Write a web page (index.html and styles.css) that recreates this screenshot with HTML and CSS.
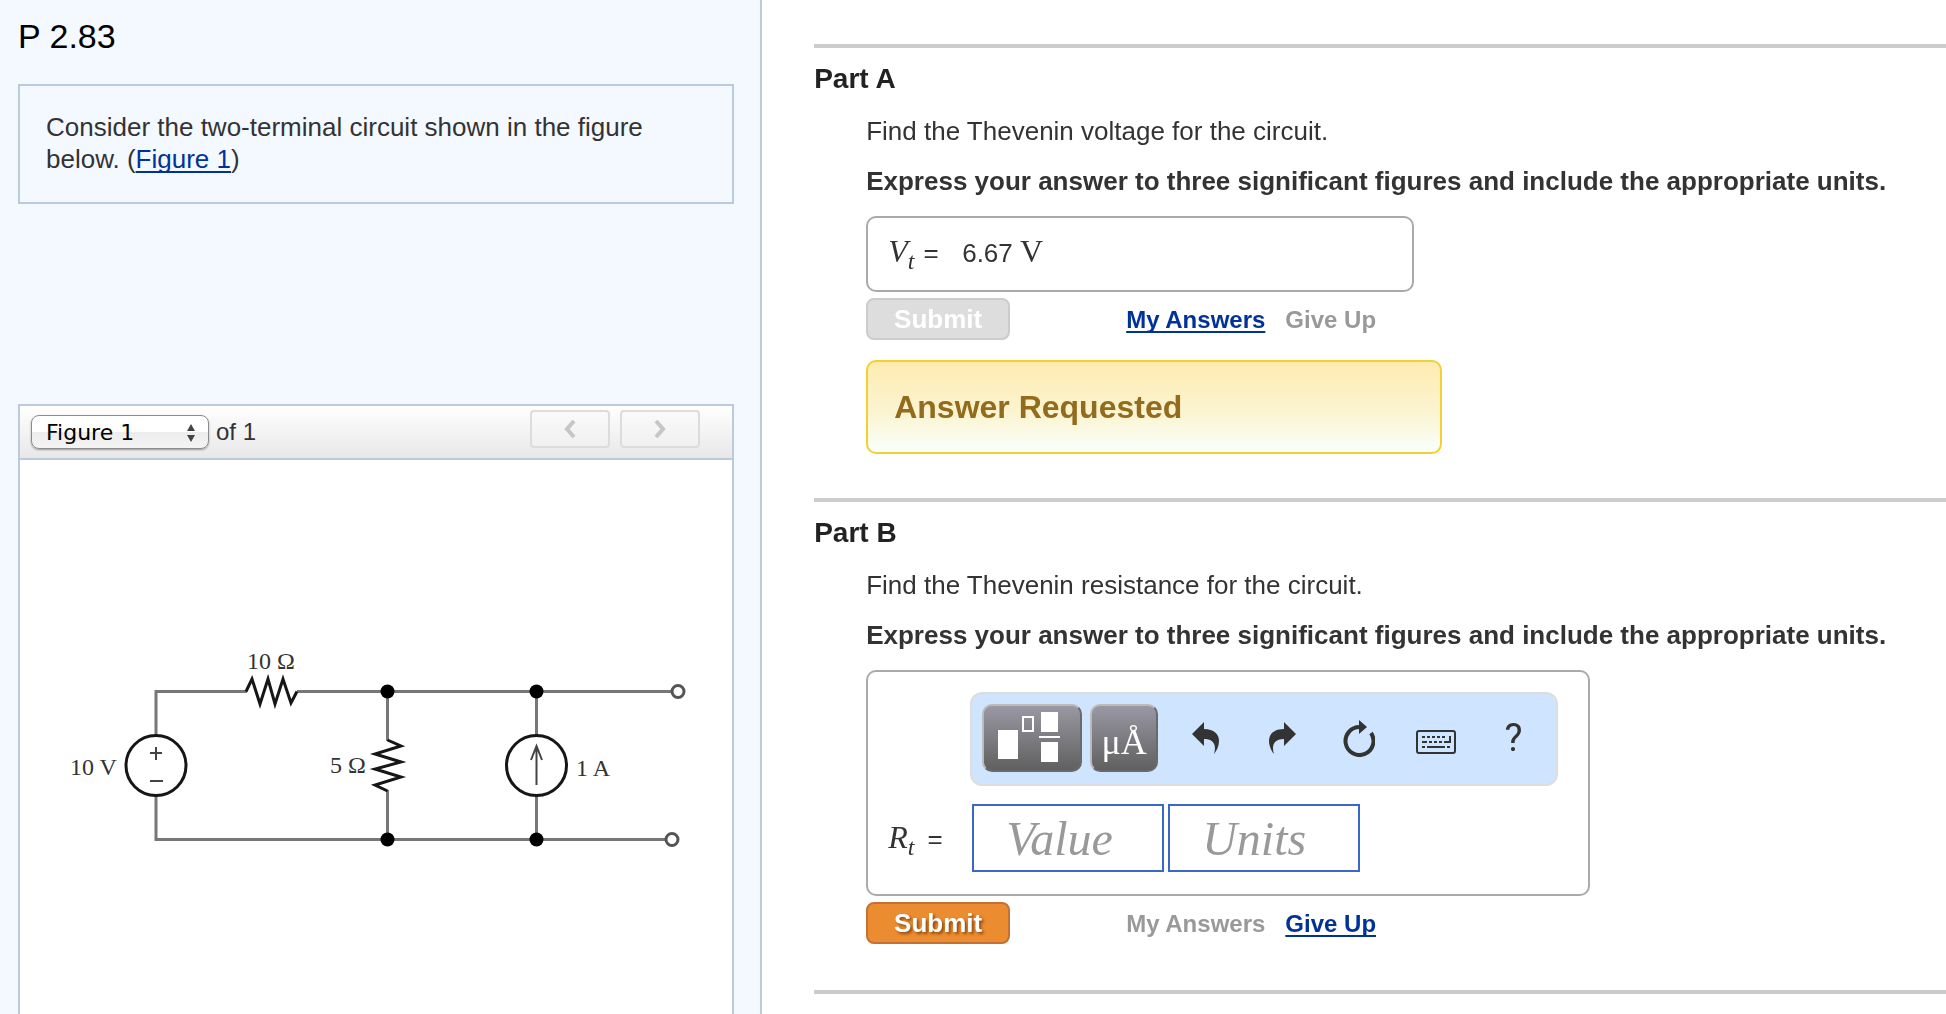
FILE: index.html
```
<!DOCTYPE html>
<html lang="en">
<head>
    <meta charset="UTF-8">
    <meta name="viewport" content="width=device-width, initial-scale=1.0">
    <title>P 2.83</title>
    <link rel="stylesheet" href="styles.css">
</head>
<body>

<div class="page">

    <div class="leftPane">
        <h1>P 2.83</h1>

        <div class="statement">
            Consider the two-terminal circuit shown in the figure below. (<a href="#figure">Figure 1</a>)
        </div>

        <div class="figure" id="figure">
            <div class="figureBar">
                <div class="selectWrap">
                    <select id="figureSelect" aria-label="Figure">
                        <option>Figure 1</option>
                    </select>
                    <svg class="selectArrows" width="10" height="18" viewBox="0 0 10 18" aria-hidden="true">
                        <path d="M5 0L9 7H1zM5 18L9 11H1z" fill="#444"/>
                    </svg>
                </div>
                <label for="figureSelect">of 1</label>
                <div class="figureNav">
                    <button type="button" aria-label="Previous figure" disabled>
                        <svg width="14" height="18" viewBox="0 0 14 18"><path d="M11 1L4 9L11 17" fill="none" stroke="#c6c6c6" stroke-width="4"/></svg>
                    </button>
                    <button type="button" aria-label="Next figure" disabled>
                        <svg width="14" height="18" viewBox="0 0 14 18"><path d="M3 1L10 9L3 17" fill="none" stroke="#c6c6c6" stroke-width="4"/></svg>
                    </button>
                </div>
            </div>

            <div class="figureBody">
                <svg class="circuit" width="640" height="210" viewBox="60 640 640 210" role="img" aria-label="Two-terminal circuit">
                    <!-- wires -->
                    <g fill="none" stroke="#777" stroke-width="3">
                        <path d="M247 691.5H156V736M156 796V839.5H666"/>
                        <path d="M297 691.5H672"/>
                        <path d="M387.5 691.5V741M387.5 790V839.5"/>
                        <path d="M536.5 691.5V736M536.5 796V839.5"/>
                    </g>
                    <!-- open terminals -->
                    <g fill="none" stroke="#555" stroke-width="3">
                        <circle cx="678" cy="691.5" r="6"/>
                        <circle cx="672" cy="839.5" r="6"/>
                    </g>
                    <!-- resistors -->
                    <g fill="none" stroke="#161616" stroke-width="3">
                        <path d="M246 691.5L252 679L260 704L268 679L275 704L283 679L291 703L297 691.5"/>
                        <path d="M387.5 740L401 746L375 754L401 762L375 769L401 777L375 785L387.5 791"/>
                    </g>
                    <!-- sources -->
                    <g fill="none" stroke="#161616" stroke-width="3">
                        <circle cx="156" cy="765.5" r="30"/>
                        <circle cx="536.5" cy="765.5" r="30"/>
                    </g>
                    <g fill="none" stroke="#444" stroke-width="2">
                        <path d="M150 753H162M156 747V760M150 781H163"/>
                        <path d="M536.5 785V746M531 760L536.5 746L542 760"/>
                    </g>
                    <g fill="#000">
                        <circle cx="387.5" cy="691.5" r="7"/>
                        <circle cx="387.5" cy="839.5" r="7"/>
                        <circle cx="536.5" cy="691.5" r="7"/>
                        <circle cx="536.5" cy="839.5" r="7"/>
                    </g>
                    <g class="circuitText">
                        <text x="247" y="669">10 Ω</text>
                        <text x="70" y="775">10 V</text>
                        <text x="330" y="773">5 Ω</text>
                        <text x="576" y="776">1 A</text>
                    </g>
                </svg>
            </div>
        </div>
    </div>

    <div class="rightPane">

        <section class="part">
            <h2>Part A</h2>
            <div class="partContent">
                <p>Find the Thevenin voltage for the circuit.</p>
                <p class="instructions">Express your answer to three significant figures and include the appropriate units.</p>

                <div class="answerBox">
                    <span class="mathLabel"><i>V<sub>t</sub></i> =</span>
                    <span class="answerValue">6.67 <span class="unit">V</span></span>
                </div>

                <div class="actions">
                    <button type="button" class="submit" disabled>Submit</button>
                    <a href="#" class="link">My Answers</a>
                    <span class="link off">Give Up</span>
                </div>

                <div class="feedback">Answer Requested</div>
            </div>
        </section>

        <section class="part">
            <h2>Part B</h2>
            <div class="partContent">
                <p>Find the Thevenin resistance for the circuit.</p>
                <p class="instructions">Express your answer to three significant figures and include the appropriate units.</p>

                <div class="answerBox entry">
                    <div class="toolbar">
                        <button type="button" class="tool templates" aria-label="Templates">
                            <svg width="70" height="52" viewBox="0 0 70 52">
                                <path d="M1 18H21V47H1zM44 0H61V20H44zM44 30H61V50H44zM42 24H63V26H42z" fill="#fff"/>
                                <path d="M26 5H36V19H26z" fill="none" stroke="#fff" stroke-width="2"/>
                            </svg>
                        </button>
                        <button type="button" class="tool symbols">μÅ</button>
                        <button type="button" class="iconButton" aria-label="Undo">
                            <svg width="28" height="34" viewBox="0 0 28 34"><path d="M1 13L13 1V8C23 8 28 13 28 20C28 25 26 29 23 33C25 27 25 18 13 18V25z" fill="#333"/></svg>
                        </button>
                        <button type="button" class="iconButton" aria-label="Redo">
                            <svg width="28" height="34" viewBox="0 0 28 34"><path d="M28 13L16 1V8C6 8 1 13 1 20C1 25 3 29 6 33C4 27 4 18 16 18V25z" fill="#333"/></svg>
                        </button>
                        <button type="button" class="iconButton" aria-label="Reset">
                            <svg width="32" height="38" viewBox="0 0 32 38"><path d="M17 8A14 14 0 1 0 28 14" fill="none" stroke="#333" stroke-width="4"/><path d="M16 1L24 8L16 15z" fill="#333"/></svg>
                        </button>
                        <button type="button" class="iconButton" aria-label="Keyboard shortcuts">
                            <svg class="keyboard" width="40" height="24" viewBox="0 0 40 24">
                                <rect x="1" y="1" width="38" height="22" rx="2" fill="none" stroke="#333" stroke-width="2"/>
                                <path d="M6 7H31" stroke="#333" stroke-width="2" stroke-dasharray="3 2"/>
                                <path d="M6 12H11M13 12H16M18 12H21M23 12H26M28 12H34V6" fill="none" stroke="#333" stroke-width="2"/>
                                <path d="M6 17H9M11 17H29M31 17H34" stroke="#333" stroke-width="2"/>
                            </svg>
                        </button>
                        <button type="button" class="iconButton help" aria-label="Help">?</button>
                    </div>

                    <label class="mathLabel" for="value"><i>R<sub>t</sub></i> =</label>
                    <div class="fields">
                        <input type="text" id="value" placeholder="Value">
                        <input type="text" id="units" placeholder="Units" aria-label="Units">
                    </div>
                </div>

                <div class="actions">
                    <button type="button" class="submit">Submit</button>
                    <span class="link off">My Answers</span>
                    <a href="#" class="link">Give Up</a>
                </div>
            </div>
        </section>

        <section class="part">
            <h2>Part C</h2>
        </section>

    </div>

</div>

</body>
</html>
```
FILE: styles.css
```
* {
    box-sizing: border-box;
}

body {
    margin: 0;
    font-family: Arial, "Liberation Sans", sans-serif;
    font-size: 26px;
    line-height: 32px;
    color: #333;
    background-color: #fff;
}

button, input, select {
    font-family: inherit;
    margin: 0;
    padding: 0;
}

a {
    color: #003399;
    text-decoration-thickness: 2px;
    text-underline-offset: 3px;
    text-decoration-skip-ink: none;
}

.page {
    display: grid;
    grid-template-columns: 47fr 73fr;
    height: 100vh;
}

/* both panes scroll on their own */
.leftPane, .rightPane {
    min-width: 0;
    overflow-y: auto;
    scrollbar-width: none;
}

/* Left side */
.leftPane {
    padding: 16px 26px 0 18px;
    background-color: #f4f8ff;
    border-right: 2px solid #bacbde;
}

h1 {
    margin: 0 0 28px;
    font-size: 34px;
    line-height: 40px;
    font-weight: normal;
    color: #000;
}

.statement {
    padding: 25px 26px;
    min-height: 120px;
    border: 2px solid #bacbde;
}

.figure {
    margin-top: 200px;
    border: 2px solid #bacbde;
    background-color: #fff;
}

.figureBar {
    display: flex;
    align-items: center;
    height: 54px;
    padding: 0 32px 0 11px;
    font-size: 24px;
    border-bottom: 2px solid #bacbde;
    background: linear-gradient(#fff, #e8e8e8);
}

.selectWrap {
    position: relative;
    margin-right: 7px;
}

select {
    display: block;
    width: 178px;
    height: 34px;
    padding-left: 14px;
    font-family: "Lucida Grande", "DejaVu Sans", sans-serif;
    font-size: 22px;
    color: #000;
    border: 1px solid #8c8c8c;
    border-radius: 8px;
    background: linear-gradient(#fff 50%, #ececec 50%, #f4f4f4);
    box-shadow: 0 1px 2px #999;
    appearance: none;
}

.selectArrows {
    position: absolute;
    top: 9px;
    right: 13px;
    pointer-events: none;
}

.figureNav {
    display: flex;
    gap: 10px;
    margin-left: auto;
    padding-bottom: 6px;
}

.figureNav button {
    display: flex;
    align-items: center;
    justify-content: center;
    width: 80px;
    height: 38px;
    border: 2px solid #dcdcdc;
    border-radius: 4px;
    background: linear-gradient(#fafafa, #f0f0f0);
}

.figureBody {
    padding: 180px 0 200px 40px;
}

.circuit {
    display: block;
    max-width: 100%;
}

.circuitText {
    font-family: "Times New Roman", "Liberation Serif", serif;
    font-size: 24px;
    fill: #333;
}

/* Right side */
.rightPane {
    padding: 44px 0 0 52px;
}

.part {
    padding: 15px 0 44px;
    border-top: 4px solid #ccc;
}

h2 {
    margin: 0 0 20px;
    font-size: 28px;
    line-height: 32px;
    color: #222;
}

.partContent {
    padding-left: 52px;
}

p {
    margin: 0 0 18px;
}

.instructions {
    margin-bottom: 19px;
    font-weight: bold;
}

.answerBox {
    display: flex;
    align-items: center;
    width: 548px;
    max-width: 100%;
    height: 76px;
    padding: 0 20px 4px;
    border: 2px solid #aaa;
    border-radius: 10px;
}

.mathLabel {
    width: 74px;
    white-space: nowrap;
}

.mathLabel i, .unit {
    font-family: "Times New Roman", "Liberation Serif", serif;
    font-size: 32px;
}

.mathLabel i {
    margin-right: 2px;
}

.mathLabel sub {
    font-size: 24px;
    line-height: 0;
}

.entry {
    display: grid;
    grid-template-columns: 82px 1fr;
    row-gap: 18px;
    width: 724px;
    height: auto;
    padding: 20px 30px 22px 20px;
}

.entry .mathLabel i {
    margin-right: 6px;
}

.toolbar {
    grid-column: 2;
    display: flex;
    align-items: center;
    height: 94px;
    padding: 0 4px 2px 10px;
    border: 2px solid #ddd;
    border-radius: 12px;
    background-color: #cfe5ff;
}

.tool {
    display: flex;
    align-items: center;
    justify-content: center;
    width: 68px;
    height: 68px;
    margin-right: 8px;
    color: #fff;
    border: 2px solid;
    border-color: #bbb #6a6a6a #6a6a6a #bbb;
    border-radius: 10px;
    background: linear-gradient(#9a98a3, #606060);
}

.templates {
    width: 100px;
}

.symbols {
    padding-top: 8px;
    font-family: "Times New Roman", "Liberation Serif", serif;
    font-size: 36px;
}

.iconButton {
    flex: 1;
    display: flex;
    align-items: center;
    justify-content: center;
    height: 68px;
    border: none;
    background: none;
}

.keyboard {
    margin-top: 8px;
}

.help {
    font-family: Roboto, sans-serif;
    font-size: 38px;
    color: #333;
}

.fields {
    display: flex;
    gap: 4px;
    padding-left: 2px;
}

input {
    width: 192px;
    height: 68px;
    padding-left: 32px;
    font-family: "Times New Roman", "Liberation Serif", serif;
    font-size: 48px;
    border: 2px solid #3968c8;
    border-radius: 0;
    background-color: #fff;
}

input::placeholder {
    font-style: italic;
    color: #999;
    opacity: 1;
}

.actions {
    display: flex;
    align-items: center;
    padding: 6px 0 2px;
}

.submit {
    width: 144px;
    height: 42px;
    margin-right: 116px;
    font-size: 26px;
    font-weight: bold;
    color: #fff;
    border: 2px solid #c57136;
    border-radius: 8px;
    background-color: #ec8c30;
    text-shadow: 2px 2px 3px #8a4a12;
}

.submit:disabled {
    border-color: #ccc;
    background-color: #ddd;
    text-shadow: none;
}

.link {
    margin-right: 20px;
    padding-top: 2px;
    font-size: 24px;
    font-weight: bold;
}

.off {
    color: #999;
}

.feedback {
    width: 576px;
    max-width: 100%;
    margin-top: 18px;
    padding: 29px 26px;
    font-size: 32px;
    font-weight: bold;
    color: #936b1d;
    border: 2px solid #f0d12f;
    border-radius: 10px;
    background: linear-gradient(#feebb0, #fbf5d4 60%, #f8fffc);
}
```
